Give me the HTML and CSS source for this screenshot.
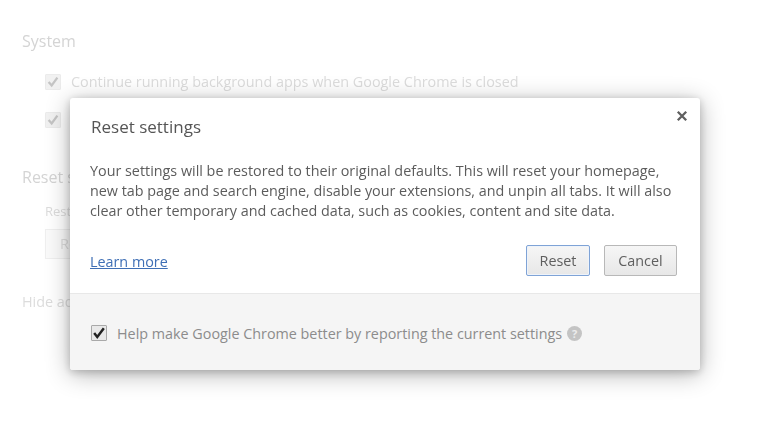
FILE: index.html
```html
<!DOCTYPE html>
<html lang="en">
<head>
<meta charset="utf-8">
<title>Reset settings</title>
<link rel="stylesheet" href="styles.css">
</head>
<body>
<main class="page">
  <h2 class="section-title">System</h2>
  <div class="option first-option">
    <span class="bg-check"><svg viewBox="0 0 16 16" width="14" height="14"><path d="M3 8l3.5 4L13 3" fill="none" stroke="#c4c4c4" stroke-width="2.6"/></svg></span>
    <span>Continue running background apps when Google Chrome is closed</span>
  </div>
  <div class="option second-option">
    <span class="bg-check"><svg viewBox="0 0 16 16" width="14" height="14"><path d="M3 8l3.5 4L13 3" fill="none" stroke="#c4c4c4" stroke-width="2.6"/></svg></span>
    <span>Use hardware acceleration when available</span>
  </div>
  <h2 class="section-title reset-title">Reset settings</h2>
  <div class="reset-desc">Restore settings to their original defaults.</div>
  <div class="bg-button">Reset settings</div>
  <div class="hide-link">Hide advanced settings...</div>
</main>

<section class="dialog">
  <div class="dialog-body">
    <button class="close" aria-label="Close"><svg viewBox="0 0 12 12" width="12" height="12"><path d="M1.8 1.8l8.4 8.4M10.200 1.800l-8.400 8.400" fill="none" stroke="#5f5f5f" stroke-width="2.300"/></svg></button>
    <h1 class="dialog-title">Reset settings</h1>
    <p class="dialog-text">Your settings will be restored to their original defaults. This will reset your homepage,<br>new tab page and search engine, disable your extensions, and unpin all tabs. It will also<br>clear other temporary and cached data, such as cookies, content and site data.</p>
    <div class="actions">
      <a class="learn" href="#">Learn more</a>
      <div class="buttons">
        <button class="btn btn-focus">Reset</button>
        <button class="btn">Cancel</button>
      </div>
    </div>
  </div>
  <div class="dialog-footer">
    <span class="check"><svg viewBox="0 0 16 16" width="14" height="14"><path d="M2.500 8l3.500 4.500L13.500 2.500" fill="none" stroke="#222" stroke-width="2.800"/></svg></span>
    <span class="footer-text">Help make Google Chrome better by reporting the current settings</span>
    <span class="help">?</span>
  </div>
</section>
</body>
</html>
```

FILE: styles.css
```css
* { box-sizing: border-box; }
html, body { margin: 0; height: 100%; }
body {
  width: 768px;
  height: 434px;
  overflow: hidden;
  background: #ffffff;
  font-family: "Open Sans", "Noto Sans", sans-serif;
  color: #5a5a5a;
  position: relative;
}
.page {
  padding: 31px 0 0 22px;
  color: #dcdcdc;
  font-size: 14.4px;
  line-height: 20px;
  filter: blur(0.6px);
}
.section-title {
  margin: 0;
  font-size: 16px;
  font-weight: 400;
  line-height: 20px;
  color: #d4d4d4;
}
.option {
  display: flex;
  align-items: center;
  gap: 10px;
  margin-left: 23px;
  height: 20px;
  color: #dcdcdc;
}
.first-option { margin-top: 21px; }
.second-option { margin-top: 18px; }
.bg-check {
  width: 16px;
  height: 16px;
  display: flex;
  align-items: center;
  justify-content: center;
  background: #f1f1f1;
  border: 1px solid #ebebeb;
  border-radius: 1px;
}
.reset-title { margin-top: 37px; }
.reset-desc { margin: 14px 0 0 23px; color: #dcdcdc; font-size: 13px; }
.bg-button {
  margin: 8px 0 0 23px;
  width: 130px;
  height: 30px;
  padding-left: 14px;
  line-height: 28px;
  border: 1px solid #efefef;
  background: #fafafa;
  color: #dcdcdc;
}
.hide-link { margin-top: 33px; color: #dcdcdc; }

.dialog {
  position: absolute;
  left: 70px;
  top: 98px;
  width: 630px;
  height: 272px;
  display: flex;
  flex-direction: column;
  background: #fff;
  border-radius: 3px;
  box-shadow: 0 4px 24px rgba(0, 0, 0, 0.3), 0 2px 8px rgba(0, 0, 0, 0.2);
  filter: blur(0.3px);
}
.dialog-body {
  position: relative;
  height: 196px;
  padding: 18px 20px 0;
  border-bottom: 1px solid #e8e8e8;
}
.close {
  position: absolute;
  top: 12px;
  right: 12px;
  width: 12px;
  height: 12px;
  padding: 0;
  border: 0;
  background: none;
  display: block;
}
.close svg { display: block; }
.dialog-title {
  margin: 0 0 0 1px;
  font-size: 17px;
  font-weight: 400;
  line-height: 22px;
  color: #555;
}
.dialog-text {
  margin: 23px 0 0;
  font-size: 14.35px;
  line-height: 20px;
  color: #5c5c5c;
  white-space: nowrap;
}
.actions {
  display: flex;
  justify-content: space-between;
  align-items: center;
  margin-top: 24px;
}
.learn {
  font-size: 14.35px;
  margin-top: 2px;
  color: #3f6fb5;
  text-decoration: underline;
}
.buttons {
  display: flex;
  gap: 14px;
  margin-right: 3px;
}
.btn {
  height: 31px;
  padding: 0;
  width: 64px;
  font: inherit;
  font-size: 14.35px;
  color: #5f5f5f;
  border: 1px solid #b8b8b8;
  border-radius: 2px;
  background: linear-gradient(#f6f6f6, #e7e7e7);
}
.btn + .btn { width: 73px; }
.btn-focus { border-color: #7fa3d6; box-shadow: inset 0 0 0 1px #eef3fa; }
.dialog-footer {
  flex: 1;
  display: flex;
  align-items: center;
  padding: 3px 0 0 21px;
  background: #f5f5f5;
  border-radius: 0 0 3px 3px;
}
.check {
  width: 16px;
  height: 16px;
  margin-top: -2px;
  display: flex;
  align-items: center;
  justify-content: center;
  background: #e9e9e9;
  border: 1px solid #a9a9a9;
  border-radius: 1px;
}
.footer-text {
  margin-left: 10px;
  font-size: 14.35px;
  color: #8c8c8c;
}
.help {
  width: 15px;
  height: 15px;
  margin-left: 5px;
  border-radius: 50%;
  background: #c4c4c4;
  color: #ececec;
  font-size: 11px;
  font-weight: 700;
  line-height: 15px;
  text-align: center;
}
```
